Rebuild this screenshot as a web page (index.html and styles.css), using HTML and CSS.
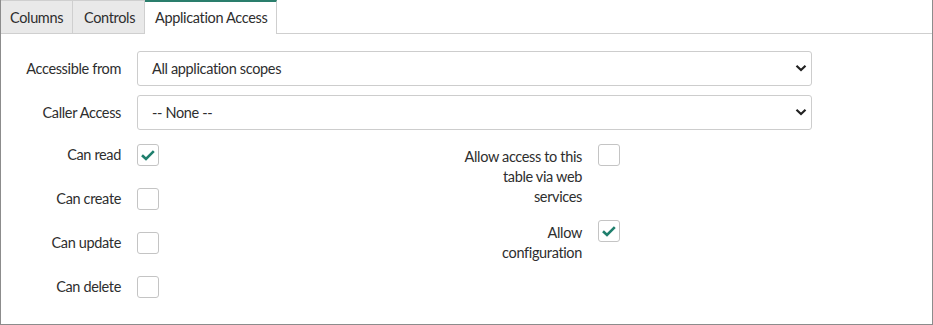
FILE: index.html
```html
<!DOCTYPE html>
<html>
<head>
<meta charset="utf-8">
<link rel="stylesheet" href="styles.css">
</head>
<body>
<div class="frame">
  <div class="tabs">
    <div class="tab">Columns</div>
    <div class="tab">Controls</div>
    <div class="tab active">Application Access</div>
    <div class="tab-fill"></div>
  </div>
  <div class="panel">
    <div class="row">
      <label class="label">Accessible from</label>
      <div class="select"><span>All application scopes</span>
        <svg class="chev" width="12" height="8" viewBox="0 0 12 8"><path d="M1.5 1.8 L6 6 L10.5 1.8" fill="none" stroke="#222" stroke-width="2.2"/></svg>
      </div>
    </div>
    <div class="row">
      <label class="label">Caller Access</label>
      <div class="select"><span>-- None --</span>
        <svg class="chev" width="12" height="8" viewBox="0 0 12 8"><path d="M1.5 1.8 L6 6 L10.5 1.8" fill="none" stroke="#222" stroke-width="2.2"/></svg>
      </div>
    </div>
    <div class="cols">
      <div class="col left">
        <div class="crow">
          <span class="clabel">Can read</span>
          <span class="box"><svg width="22" height="22" viewBox="0 0 22 22"><path d="M5 11.2 L9 15 L16.8 7.2" fill="none" stroke="#1f7f6d" stroke-width="2.6"/></svg></span>
        </div>
        <div class="crow">
          <span class="clabel">Can create</span>
          <span class="box"></span>
        </div>
        <div class="crow">
          <span class="clabel">Can update</span>
          <span class="box"></span>
        </div>
        <div class="crow">
          <span class="clabel">Can delete</span>
          <span class="box"></span>
        </div>
      </div>
      <div class="col right">
        <div class="crow multi">
          <span class="clabel">Allow access to this<br>table via web<br>services</span>
          <span class="box"></span>
        </div>
        <div class="crow multi">
          <span class="clabel">Allow<br>configuration</span>
          <span class="box"><svg width="22" height="22" viewBox="0 0 22 22"><path d="M5 11.2 L9 15 L16.8 7.2" fill="none" stroke="#1f7f6d" stroke-width="2.6"/></svg></span>
        </div>
      </div>
    </div>
  </div>
</div>
</body>
</html>
```
FILE: styles.css
```css
html, body {
  margin: 0;
  padding: 0;
  background: #fff;
}
body {
  font-family: Lato, "Liberation Sans", sans-serif;
  font-size: 14.5px;
  letter-spacing: -0.35px;
  color: #2e2e2e;
}
.frame {
  width: 933px;
  height: 325px;
  box-sizing: border-box;
  border: 1px solid #8c8c8c;
  border-top: none;
  overflow: hidden;
}
.tabs {
  display: flex;
  height: 34px;
}
.tab {
  box-sizing: border-box;
  height: 34px;
  line-height: 34px;
  padding: 0 10px;
  background: #e9e9e9;
  border-top: 1px solid #cfcfcf;
  border-right: 1px solid #cfcfcf;
  border-bottom: 1px solid #cfcfcf;
  white-space: nowrap;
}
.tab:first-child { padding-left: 9px; width: 72px; }
.tab:nth-child(2) { width: 72px; padding-left: 11px; }
.tab.active {
  background: #fff;
  border-top: 2px solid #2a7e6c;
  border-bottom: none;
  border-right: 1px solid #cfcfcf;
  width: 132px;
  line-height: 32px;
  padding-left: 10px;
}
.tab-fill {
  flex: 1;
  border-bottom: 1px solid #cfcfcf;
}
.panel {
  padding-top: 17px;
}
.row {
  display: flex;
  align-items: center;
  height: 34px;
  margin-bottom: 10px;
}
.label {
  width: 120px;
  margin-right: 16px;
  text-align: right;
}
.select {
  box-sizing: border-box;
  width: 675px;
  height: 35px;
  border: 1px solid #cdcdcd;
  border-radius: 3px;
  display: flex;
  align-items: center;
  justify-content: space-between;
  padding: 0 4px 0 14px;
}
.cols {
  display: flex;
  padding-top: 5px;
}
.col.left { width: 461px; }
.crow {
  display: flex;
  align-items: flex-start;
  margin-bottom: 22px;
}
.clabel {
  width: 120px;
  margin-right: 16px;
  text-align: right;
  line-height: 22px;
  white-space: nowrap;
}
.crow.multi { margin-bottom: 13px; }
.crow.multi .clabel { line-height: 20px; padding-top: 3px; }
.box {
  box-sizing: border-box;
  width: 22px;
  height: 22px;
  border: 1px solid #c4c4c4;
  border-radius: 3px;
  display: block;
  flex: none;
}
.box svg { display: block; margin: -1px; }
```
